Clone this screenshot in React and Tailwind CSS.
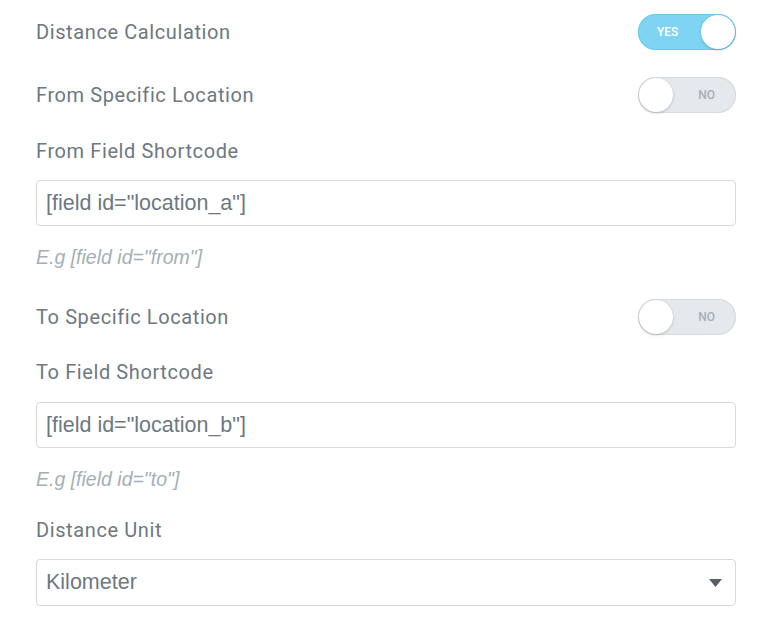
import React from 'react';

const Switch = ({ on }) => (
  <div
    className={`relative w-[98px] h-[36px] rounded-full flex items-center ${
      on ? 'bg-[#7fd4f3] shadow-[inset_0_0_0_1px_#6cc8ea]' : 'bg-[#e6e9ec] shadow-[inset_0_0_0_1px_#d5dadf]'
    }`}
  >
    <span
      className={`absolute text-[12px] font-medium uppercase ${
        on ? 'left-[19px] text-white' : 'right-[21px] text-[#a4afb7]'
      }`}
      style={{ fontFamily: 'Roboto, sans-serif' }}
    >
      {on ? 'Yes' : 'No'}
    </span>
    <div
      className={`absolute top-[1px] w-[34px] h-[34px] rounded-full bg-white shadow-[0_1px_3px_rgba(0,0,0,0.2)] ${
        on ? 'right-[1px]' : 'left-[1px]'
      }`}
    />
  </div>
);

const Label = ({ children, className = '' }) => (
  <div className={`h-[24px] flex items-center text-[20px] tracking-[0.6px] text-[#6d7882] ${className}`}>{children}</div>
);

const ToggleRow = ({ label, on, className = '' }) => (
  <div className={`flex items-center justify-between h-[36px] ${className}`}>
    <Label>{label}</Label>
    <Switch on={on} />
  </div>
);

const Input = ({ value, className = '' }) => (
  <div
    className={`h-[46px] border border-[#d5dadf] rounded-[4px] bg-white flex items-center pl-[9px] text-[21.5px] text-[#6d7882] ${className}`}
    style={{ fontFamily: '"Liberation Sans", Arial, sans-serif' }}
  >
    {value}
  </div>
);

const Hint = ({ children, className = '' }) => (
  <div
    className={`h-[24px] flex items-center italic text-[19.5px] text-[#a4afb7] ${className}`}
    style={{ fontFamily: '"Liberation Sans", Arial, sans-serif' }}
  >
    {children}
  </div>
);

export default function App() {
  return (
    <div
      className="w-[768px] h-[635px] overflow-hidden bg-white"
      style={{ fontFamily: 'Roboto, sans-serif' }}
    >
      <div className="pl-[36px] pr-[32px] pt-[14px] flex flex-col">
        <ToggleRow label="Distance Calculation" on />
        <ToggleRow label="From Specific Location" className="mt-[27px]" />
        <Label className="mt-[26px]">From Field Shortcode</Label>
        <Input value={'[field id="location_a"]'} className="mt-[17px]" />
        <Hint className="mt-[20px]">E.g [field id="from"]</Hint>
        <ToggleRow label="To Specific Location" className="mt-[29px]" />
        <Label className="mt-[25px]">To Field Shortcode</Label>
        <Input value={'[field id="location_b"]'} className="mt-[18px]" />
        <Hint className="mt-[20px]">E.g [field id="to"]</Hint>
        <Label className="mt-[26px]">Distance Unit</Label>
        <div
          className="mt-[17px] h-[47px] border border-[#d5dadf] rounded-[4px] bg-white flex items-center justify-between pl-[9px] pr-[13px] text-[21.5px] text-[#6d7882]"
          style={{ fontFamily: '"Liberation Sans", Arial, sans-serif' }}
        >
          <span>Kilometer</span>
          <svg width="13" height="8" viewBox="0 0 13 8">
            <path d="M0 0 H13 L6.5 8 Z" fill="#556068" />
          </svg>
        </div>
        <Label className="mt-[31px]">Show Distance Label Below</Label>
      </div>
    </div>
  );
}
